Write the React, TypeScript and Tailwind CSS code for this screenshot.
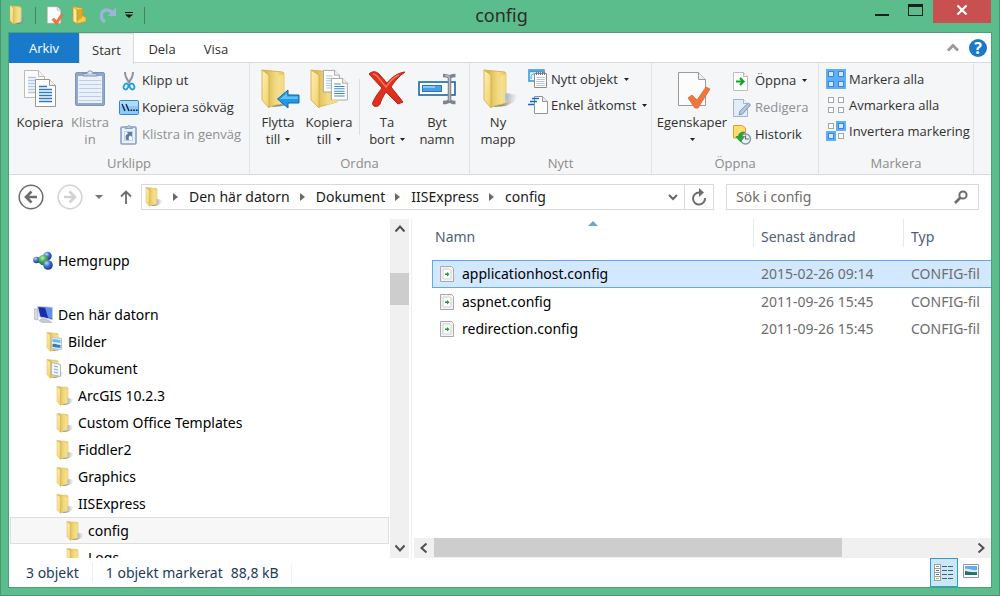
import { useState } from 'react';
import type { ReactNode } from 'react';
import clsx from 'clsx';

function Folder({ className, children }: { className?: string; children?: ReactNode }) {
  return (
    <svg viewBox="0 0 36 40" className={clsx('shrink-0', className)} aria-hidden="true">
      <defs>
        <linearGradient id="folderInside" x1="0" x2="1" y1="0" y2="0">
          <stop offset="0.2" stopColor="#dcb94c" />
          <stop offset="0.65" stopColor="#f3dc85" />
          <stop offset="1" stopColor="#e8c862" />
        </linearGradient>
        <linearGradient id="folderFront" x1="0" x2="1" y1="0" y2="1">
          <stop offset="0" stopColor="#fdf1b8" />
          <stop offset="1" stopColor="#f0cf66" />
        </linearGradient>
        <linearGradient id="folderShadow" x1="0" x2="1" y1="0" y2="0">
          <stop offset="0.3" stopColor="#6b6b6b" stopOpacity="0.8" />
          <stop offset="1" stopColor="#aaa" stopOpacity="0" />
        </linearGradient>
      </defs>
      <path d="M12 38 24 24 36 26 32 33 24 37Z" fill="url(#folderShadow)" />
      <path d="M2 1 23 3 24 5V34L9 38Z" fill="url(#folderInside)" stroke="#d0a843" strokeWidth="0.8" />
      {children}
      <path d="M18 7 25 5V33L18 36Z" fill="#f9e69c" opacity="0.6" />
      <path d="M2 1 9 6V39L2 31Z" fill="url(#folderFront)" stroke="#cfa948" strokeWidth="0.8" />
      <path d="M23 25v7l2-1v-7Z" fill="#9cc8e8" />
    </svg>
  );
}

function PageLines({ x, y, color }: { x: number; y: number; color: string }) {
  return (
    <g>
      <path d={`M${x + 0.5} ${y + 0.5}h14l6 6v21h-20Z`} fill="#fff" stroke="#969696" />
      <path d={`M${x + 14.5} ${y + 0.5}v6h6`} fill="#f2f2f2" stroke="#969696" />
      <path
        d={`M${x + 4} ${y + 7.5}h8m-8 3h13m-13 3h13m-13 3h13m-13 3h13m-13 3h13`}
        stroke={color}
        strokeWidth="1.300"
      />
    </g>
  );
}

function CopyIcon() {
  return (
    <svg viewBox="0 0 36 40" className="h-10 w-9" aria-hidden="true">
      <g opacity="0.6">
        <PageLines x={2} y={1} color="#79aede" />
      </g>
      <g transform="translate(13 10)">
        <PageLines x={0} y={0} color="#2f79c0" />
      </g>
    </svg>
  );
}

function PasteIcon() {
  return (
    <svg viewBox="0 0 32 40" className="h-10 w-8" aria-hidden="true">
      <rect x="1.5" y="3.5" width="29" height="33" rx="1.5" fill="#90a7cf" stroke="#8295b8" />
      <path d="M4 7h24v27H4Z" fill="#eaf1fb" />
      <path d="M5 11.5h22m-22 4h22m-22 4h22m-22 4h22m-22 4h22m-22 4h22" stroke="#bccde6" />
      <path d="M9 7V4.5h4C13 1 19 1 19 4.5h4V7Z" fill="#c3cfdf" stroke="#8295b0" />
      <circle cx="16" cy="3.5" r="1" fill="#f5f6f7" />
    </svg>
  );
}

function ScissorsIcon() {
  return (
    <svg viewBox="0 0 20 20" className="size-5" fill="none" aria-hidden="true">
      <path d="M6 1c0 4 2 8 5 11M14 1c0 4-2 8-5 11" stroke="#8b949d" strokeWidth="2" />
      <ellipse cx="7" cy="15.5" rx="2.2" ry="3" stroke="#1ca0dc" strokeWidth="1.8" transform="rotate(25 7 15.5)" />
      <ellipse cx="13" cy="15.5" rx="2.2" ry="3" stroke="#1ca0dc" strokeWidth="1.8" transform="rotate(-25 13 15.5)" />
    </svg>
  );
}

function PathIcon() {
  return (
    <svg viewBox="0 0 20 20" className="size-5" aria-hidden="true">
      <rect x="0.5" y="2.5" width="19" height="14" rx="1" fill="#8fc8fa" stroke="#2d89d8" />
      <path d="M1 3h18v5H1Z" fill="#b2dafc" />
      <path d="m3 6 3 7m1-7 3 7" stroke="#18293f" strokeWidth="1.4" />
      <path d="M11.5 12.2h1.7m1 0h1.7m1 0h1.7" stroke="#18293f" strokeWidth="1.6" />
    </svg>
  );
}

function PasteShortcutIcon() {
  return (
    <svg viewBox="0 0 20 20" className="size-5" aria-hidden="true">
      <rect x="2" y="2" width="15" height="17" rx="1" fill="#e8f0fa" stroke="#8aa0c6" strokeWidth="1.6" />
      <path d="M6 3.5V2h2.5c0-2 2.5-2 2.5 0h2.5v1.5Z" fill="#b9c8df" stroke="#8aa0c6" />
      <rect x="5.5" y="6.5" width="8" height="9" fill="#f7fafe" stroke="#c2d0e6" />
      <path d="M7 15c-1-4 0-6 2-6L8 7h5v5l-1.500-1.500C9.500 11 9.500 13 10 15Z" fill="#5f7ba8" />
    </svg>
  );
}

function MoveIcon() {
  return (
    <div className="relative">
      <Folder className="h-10 w-9" />
      <svg viewBox="0 0 24 20" className="absolute -right-1 bottom-0 h-5 w-6" aria-hidden="true">
        <path d="M1.5 10 12 1v5h11v8H12v5Z" fill="#1e9ae8" stroke="#1169b0" />
        <path d="M4 10 11 4v3.500h11V10Z" fill="#62c0f8" />
      </svg>
    </div>
  );
}

function CopyToIcon() {
  return (
    <svg viewBox="0 0 40 40" className="h-10 w-10" aria-hidden="true">
      <path d="M2 1 22 3 28 6V33L10 38Z" fill="url(#folderInside)" stroke="#d3ad4c" strokeWidth="0.8" />
      <g transform="translate(14 1) scale(.8)">
        <PageLines x={0} y={0} color="#a8c8e8" />
      </g>
      <g transform="translate(22 9) scale(.8)">
        <PageLines x={0} y={0} color="#3f86c9" />
      </g>
      <path d="M18 36V31h10v2Z" fill="#f3db83" />
      <path d="M2 1 10 6V39L2 31Z" fill="url(#folderFront)" stroke="#cfa948" strokeWidth="0.8" />
    </svg>
  );
}

function DeleteIcon() {
  return (
    <svg viewBox="0 0 40 40" className="size-10" aria-hidden="true">
      <path
        d="M2 5c3-3 7-3 10 0l8 9C24 9 30 4 38 3c-6 4-11 10-14 15l12 15-5 2-12-12c-3 4-5 9-6 12-2 4-9 3-7-2 2-5 6-10 9-14Z"
        fill="#e02f1c"
        stroke="#b02418"
      />
      <path d="M6 5c2 0 3 1 4 2l9 11c4-6 8-10 13-12" fill="none" stroke="#f3745c" strokeWidth="1.5" />
    </svg>
  );
}

function RenameIcon() {
  return (
    <svg viewBox="0 0 40 40" className="size-10" aria-hidden="true">
      <rect x="2" y="13" width="36" height="13" fill="#fff" stroke="#1766ab" strokeWidth="1.6" />
      <rect x="5.5" y="16.5" width="19" height="6" fill="#4d9fe3" stroke="#2978c4" />
      <path d="M6 17h12v2H6Z" fill="#8cc4f3" />
      <path
        d="M26 6.5c4 0 5.500.5 6.500 2 1-1.500 2.500-2 6-2M32.5 8v24M26 33.500c4 0 5.500-.5 6.500-2 1 1.500 2.500 2 6 2"
        fill="none"
        stroke="#7c858e"
        strokeWidth="3.6"
      />
      <path d="M28 6.5c3 0 4 1 4.5 2M32.500 8v24" fill="none" stroke="#b4bbc1" strokeWidth="1.4" />
    </svg>
  );
}

function NewItemIcon() {
  return (
    <svg viewBox="0 0 20 20" className="size-5" aria-hidden="true">
      <rect x="1" y="1" width="15" height="11" fill="#e7f4fd" stroke="#3f9bd6" strokeWidth="1.6" />
      <path d="M2 2.500h13" stroke="#3f9bd6" strokeWidth="1.500" />
      <path d="M3 10c0-4 1-5 3-5" fill="none" stroke="#3f9bd6" />
      <path d="M6.5 4.5h12v14h-12Z" fill="#fff" stroke="#8c8c8c" />
      <path d="M8.5 3v3m2-3v3m2-3v3m2-3v3m2-3v3" stroke="#777" />
      <path d="M8.5 8.5h8m-8 2h8m-8 2h8m-8 2h8m-8 2h8" stroke="#b4c7db" />
    </svg>
  );
}

function EasyAccessIcon() {
  return (
    <svg viewBox="0 0 20 20" className="size-5" aria-hidden="true">
      <path d="M6.5 1.5h8l5 5v12h-13Z" fill="#fff" stroke="#949494" />
      <path d="M14.5 1.5v5h5" fill="#eee" stroke="#949494" />
      <path d="M4 3.5h7M2 6.5h7M0 9.5h6" stroke="#1568d3" strokeWidth="1.5" />
    </svg>
  );
}

function PropertiesIcon({ className }: { className: string }) {
  return (
    <svg viewBox="0 0 36 40" className={className} aria-hidden="true">
      <path d="M2.5 3.5h20l7 7v26h-27Z" fill="#fcfcfc" stroke="#9b9b9b" />
      <path d="M22.5 3.5v7h7" fill="#eee" stroke="#9b9b9b" />
      <path d="m12 29 4-3 5 5 9-13 4 2-12 19h-3Z" fill="#f0763c" stroke="#d9673a" strokeWidth="0.8" />
    </svg>
  );
}

function OpenIcon() {
  return (
    <svg viewBox="0 0 20 20" className="size-5" aria-hidden="true">
      <path d="M1.5 1.5h10l4 4v14h-14Z" fill="#fff" stroke="#bdbdbd" />
      <path d="M11.5 1.5v4h4" fill="#eee" stroke="#bdbdbd" />
      <path d="M4 10.500h7M8 7l3.500 3.500L8 14" fill="none" stroke="#14a326" strokeWidth="2.200" />
    </svg>
  );
}

function ConfigFileIcon() {
  return (
    <svg viewBox="0 0 16 18" className="h-[18px] w-4 shrink-0" aria-hidden="true">
      <path d="M1.5 1.5h11l2 2v13h-13Z" fill="#f4f4f4" stroke="#a9a9a9" />
      <path d="M4 4h6.500l1.500 1.500V14H4Z" fill="#fff" stroke="#d0d0d0" />
      <path d="M6 8.5h2V7l2.500 2.300L8 11.500V10H6Z" fill="#159c26" />
    </svg>
  );
}

function EditIcon() {
  return (
    <svg viewBox="0 0 20 20" className="size-5" aria-hidden="true">
      <path d="M1.5 1.5h10l4 4v13h-14Z" fill="#e3edf9" stroke="#9fb4d2" />
      <path d="M11.5 1.5v4h4" fill="#f5f9fe" stroke="#9fb4d2" />
      <path d="m7 17 1-4 8.500-8 2 2-8 9Z" fill="#b3c5df" stroke="#7e97bd" />
    </svg>
  );
}

function HistoryIcon() {
  return (
    <svg viewBox="0 0 20 20" className="size-5" aria-hidden="true">
      <path d="M1.5.5h9l3 2.500v10h-12Z" fill="#fbdc6c" stroke="#cda436" />
      <circle cx="13.500" cy="14" r="5" fill="#eef2f6" stroke="#8496a8" strokeWidth="1.4" />
      <path d="M13.500 10.500V14H17" fill="none" stroke="#5c6e80" strokeWidth="1.2" />
      <path d="M12.500 7C8 7 6.500 9 6.500 11.500H4l4.500 5.500 4-5.500h-3c0-2 1-3 3-3.500Z" fill="#27a93a" stroke="#178326" strokeWidth="0.6" />
    </svg>
  );
}

// Four tiles; the cells listed in `on` get the blue highlight
function TilesIcon({ on }: { on: number[] }) {
  const cells = [[0, 0], [10, 0], [0, 10], [10, 10]];
  return (
    <svg viewBox="0 0 20 20" className="size-5" aria-hidden="true">
      {cells.map(([x, y], i) => {
        const active = on.includes(i);
        return (
          <g key={i}>
            {active && <rect x={x} y={y} width="10" height="10" fill="#5eaefc" />}
            <rect
              x={x + 2.5}
              y={y + 2.5}
              width="5"
              height="5"
              fill={active ? '#d3e8fd' : '#fff'}
              stroke={active ? '#3987d6' : '#a6a6a6'}
            />
          </g>
        );
      })}
    </svg>
  );
}

function HomegroupIcon() {
  return (
    <svg viewBox="0 0 20 20" className="size-5" aria-hidden="true">
      <defs>
        <radialGradient id="blueBall" cx="0.35" cy="0.3" r="0.7">
          <stop offset="0" stopColor="#c3d9f9" />
          <stop offset="0.5" stopColor="#4472d0" />
          <stop offset="1" stopColor="#1b358f" />
        </radialGradient>
        <radialGradient id="greenBall" cx="0.4" cy="0.3" r="0.7">
          <stop offset="0" stopColor="#c1ecb8" />
          <stop offset="0.5" stopColor="#42ab55" />
          <stop offset="1" stopColor="#1b7331" />
        </radialGradient>
      </defs>
      <circle cx="14.500" cy="5" r="4.200" fill="url(#blueBall)" />
      <circle cx="3.500" cy="9" r="3.300" fill="url(#blueBall)" />
      <circle cx="10.500" cy="9" r="5.200" fill="url(#greenBall)" />
      <circle cx="15" cy="14" r="4.800" fill="url(#blueBall)" />
    </svg>
  );
}

function ComputerIcon() {
  return (
    <svg viewBox="0 0 20 20" className="size-5" aria-hidden="true">
      <path d="M0 4h4v11l-4-1Z" fill="#d4dadf" stroke="#a0a8b0" strokeWidth="0.6" />
      <path d="M3.500 1.500 18.500 2.500v12L6 12Z" fill="#1a2fa6" stroke="#c6ccd4" />
      <path d="M11 2.500 18 3v10.500l-4-1Z" fill="#5e8ef0" />
      <path d="m8 13.500 6 1.500 4 2.500H8l-3-2Z" fill="#c4cad1" stroke="#a0a8b0" strokeWidth="0.5" />
    </svg>
  );
}

function PictureFolder() {
  return (
    <div className="relative">
      <Folder className="h-5 w-[18px]" />
      <svg viewBox="0 0 11 13" className="absolute right-0.5 bottom-0.5 h-[13px] w-[11px]" aria-hidden="true">
        <path d="m.5.5 10 1v11l-10-1Z" fill="#e9f3fb" stroke="#b3c2ce" />
        <path d="m1.500 2 8 1v3l-8-1Z" fill="#6cb7ee" />
        <path d="M1.500 7c3-1 5 1 8 1v3l-8-1Z" fill="#3b7cab" />
      </svg>
    </div>
  );
}

function DocumentFolder() {
  return (
    <div className="relative">
      <Folder className="h-5 w-[18px]" />
      <svg viewBox="0 0 10 15" className="absolute right-[3px] bottom-0.5 h-[15px] w-2.5" aria-hidden="true">
        <path d="m.5.5 9 2v12l-9-2Z" fill="#f2f6fa" stroke="#b3bac2" />
        <path d="m3 4 4 1m-4 2 4 1m-4 2 4 1" stroke="#8aa6c6" />
      </svg>
    </div>
  );
}

function Caret() {
  return (
    <svg viewBox="0 0 5 3" className="inline-block h-[3px] w-[5px]" aria-hidden="true">
      <path d="M0 0h5L2.5 3Z" fill="#222" />
    </svg>
  );
}

function BigButton({ icon, lines, caret, disabled, className }: {
  icon: ReactNode;
  lines: string[];
  caret?: boolean;
  disabled?: boolean;
  className: string;
}) {
  return (
    <button
      type="button"
      disabled={disabled}
      className={clsx('flex shrink-0 flex-col items-center pt-1.5 leading-[17px]', disabled && 'text-[#8f8f8f]', className)}
    >
      <span className="mb-[5px] flex h-10 justify-center">{icon}</span>
      {lines.map((line, i) => (
        <span key={i} className="flex h-[17px] items-center gap-[5px] whitespace-nowrap">
          {line}
          {caret && i === lines.length - 1 && <Caret />}
        </span>
      ))}
    </button>
  );
}

function SmallButton({ icon, label, caret, disabled, tight }: {
  icon: ReactNode;
  label: string;
  caret?: boolean;
  disabled?: boolean;
  tight?: boolean;
}) {
  return (
    <button
      type="button"
      disabled={disabled}
      className={clsx(
        'flex items-center whitespace-nowrap',
        tight ? 'h-[26px]' : 'h-[27px]',
        disabled && 'text-[#8f8f8f]'
      )}
    >
      <span className="mr-[3px]">{icon}</span>
      {label}
      {caret && <span className="ml-1.5 flex"><Caret /></span>}
    </button>
  );
}

function Group({ title, className, children }: { title: string; className: string; children: ReactNode }) {
  return (
    <section aria-label={title} className={clsx('flex shrink-0 flex-col', className)}>
      <div className="flex flex-1 border-r border-[#e1e3e5]">
        <div className="flex flex-1 flex-col">
          <div className="flex flex-1 px-[3px]">{children}</div>
          <div className="pb-0.5 text-center leading-[18px] text-[#8c8c8c]">{title}</div>
        </div>
      </div>
    </section>
  );
}

const tree = [
  { label: 'Den här datorn', indent: 'pl-[23px]', icon: <ComputerIcon /> },
  { label: 'Bilder', indent: 'pl-[35px]', icon: <PictureFolder /> },
  { label: 'Dokument', indent: 'pl-[35px]', icon: <DocumentFolder /> },
  { label: 'ArcGIS 10.2.3', indent: 'pl-[45px]' },
  { label: 'Custom Office Templates', indent: 'pl-[45px]' },
  { label: 'Fiddler2', indent: 'pl-[45px]' },
  { label: 'Graphics', indent: 'pl-[45px]' },
  { label: 'IISExpress', indent: 'pl-[45px]' },
  { label: 'config', indent: 'pl-[55px]', current: true },
  { label: 'Logs', indent: 'pl-[55px]' },
];

const files = [
  { name: 'applicationhost.config', modified: '2015-02-26 09:14', type: 'CONFIG-fil' },
  { name: 'aspnet.config', modified: '2011-09-26 15:45', type: 'CONFIG-fil' },
  { name: 'redirection.config', modified: '2011-09-26 15:45', type: 'CONFIG-fil' },
];

const crumbs = ['Den här datorn', 'Dokument', 'IISExpress', 'config'];

function TitleBar() {
  return (
    <header className="grid h-8 shrink-0 grid-cols-[1fr_auto_1fr] pr-px">
      <div className="flex h-[30px] items-center pl-px">
        <Folder className="h-5 w-[18px]" />
        <span className="ml-2 h-[17px] w-px bg-[#43825f]" />
        <button type="button" aria-label="Egenskaper" className="ml-2.5">
          <PropertiesIcon className="h-5 w-[18px]" />
        </button>
        <button type="button" aria-label="Ny mapp" className="ml-2">
          <svg viewBox="0 0 16 20" className="h-5 w-4" aria-hidden="true">
            <path d="M1 1.500 10.500 3v8L14 12v4.500L5 19Z" fill="#f4cf4e" stroke="#c9961f" strokeWidth="0.8" />
            <path d="M5 4.500 10 4v9l-5 3Z" fill="#d9a92c" />
            <path d="M1 1.500 5 5v14l-4-3Z" fill="#fdec9a" stroke="#c9961f" strokeWidth="0.8" />
          </svg>
        </button>
        <button type="button" aria-label="Gör om" className="ml-[11px]">
          <svg viewBox="0 0 18 18" className="size-[18px]" fill="none" aria-hidden="true">
            <path d="M6 16C1 13 1 5 7 4c3-.5 5 1 7 3" stroke="#9db4d6" strokeWidth="3.400" />
            <path d="M17 1.500V10H8.500Z" fill="#9db4d6" />
          </svg>
        </button>
        <button type="button" aria-label="Anpassa verktygsfältet" className="ml-2">
          <svg viewBox="0 0 8 6" className="h-1.5 w-2" aria-hidden="true">
            <path d="M0 0h8v1H0ZM0 2.500h8L4 6Z" fill="#111" />
          </svg>
        </button>
        <span className="ml-[11px] h-[17px] w-px bg-[#43825f]" />
      </div>
      <h1 className="pl-1 text-lg leading-[30px] text-[#2c2c2c]">config</h1>
      <div className="flex items-start justify-end">
        <button type="button" aria-label="Minimera" className="mt-3.5 mr-[19px] h-[2px] w-3.5 bg-[#1f1f1f]" />
        <button
          type="button"
          aria-label="Maximera"
          className="mt-1 mr-2.5 h-3 w-[15px] border border-t-[3px] border-[#1f1f1f]"
        />
        <button type="button" aria-label="Stäng" className="flex h-[23px] w-[58px] items-center justify-center bg-[#c85051] pb-1">
          <svg viewBox="0 0 12 10" className="h-2.5 w-3" aria-hidden="true">
            <path d="m1.5.5 9 9m0-9-9 9" stroke="#fff" strokeWidth="2.2" />
          </svg>
        </button>
      </div>
    </header>
  );
}

function Ribbon() {
  return (
    <div className="flex h-28 shrink-0 overflow-hidden border-b border-[#dadbdc] bg-[#f5f6f7] font-['Open_Sans','Noto_Sans',sans-serif] text-[13px] text-[#303030]">
      <Group title="Urklipp" className="w-[241px]">
        <BigButton className="w-[56px]" icon={<CopyIcon />} lines={['Kopiera']} />
        <BigButton className="w-[44px]" icon={<PasteIcon />} lines={['Klistra', 'in']} disabled />
        <div className="ml-[7px] pt-1">
          <SmallButton icon={<ScissorsIcon />} label="Klipp ut" />
          <SmallButton icon={<PathIcon />} label="Kopiera sökväg" />
          <SmallButton icon={<PasteShortcutIcon />} label="Klistra in genväg" disabled />
        </div>
      </Group>
      <Group title="Ordna" className="w-[220px]">
        <BigButton className="w-[50px]" icon={<MoveIcon />} lines={['Flytta', 'till']} caret />
        <BigButton className="w-[52px]" icon={<CopyToIcon />} lines={['Kopiera', 'till']} caret />
        <span className="mt-4 ml-1 h-14 w-px bg-[#dcdee0]" />
        <BigButton className="ml-0.5 w-[50px]" icon={<DeleteIcon />} lines={['Ta', 'bort']} caret />
        <BigButton className="w-[50px]" icon={<RenameIcon />} lines={['Byt', 'namn']} />
      </Group>
      <Group title="Nytt" className="w-[182px]">
        <BigButton
          className="w-[50px]"
          icon={<Folder className="ml-1 h-10 w-9" />}
          lines={['Ny', 'mapp']}
        />
        <div className="ml-[5px] pt-[3px]">
          <SmallButton icon={<NewItemIcon />} label="Nytt objekt" caret tight />
          <SmallButton icon={<EasyAccessIcon />} label="Enkel åtkomst" caret tight />
        </div>
      </Group>
      <Group title="Öppna" className="w-[167px]">
        <BigButton
          className="w-[74px]"
          icon={<PropertiesIcon className="ml-1 h-10 w-9" />}
          lines={['Egenskaper', '']}
          caret
        />
        <div className="ml-[3px] pt-1">
          <SmallButton icon={<OpenIcon />} label="Öppna" caret />
          <SmallButton icon={<EditIcon />} label="Redigera" disabled />
          <SmallButton icon={<HistoryIcon />} label="Historik" />
        </div>
      </Group>
      <Group title="Markera" className="w-[155px]">
        <div className="ml-1 pt-[3px]">
          <SmallButton icon={<TilesIcon on={[0, 1, 2, 3]} />} label="Markera alla" tight />
          <SmallButton icon={<TilesIcon on={[]} />} label="Avmarkera alla" tight />
          <SmallButton icon={<TilesIcon on={[1, 2]} />} label="Invertera markering" tight />
        </div>
      </Group>
    </div>
  );
}

function AddressRow() {
  return (
    <div className="flex h-11 shrink-0 items-center pr-3 pl-[9px]">
      <button type="button" aria-label="Bakåt">
        <svg viewBox="0 0 26 26" className="size-[26px]" fill="none" stroke="#6d6d6d" aria-hidden="true">
          <circle cx="13" cy="13" r="11.8" strokeWidth="1.5" />
          <path d="M19 13H8m5.500-5.500L8 13l5.500 5.500" strokeWidth="2.6" />
        </svg>
      </button>
      <button type="button" aria-label="Framåt" disabled className="ml-[13px]">
        <svg viewBox="0 0 26 26" className="size-[26px]" fill="none" stroke="#d2d2d2" aria-hidden="true">
          <circle cx="13" cy="13" r="11.8" strokeWidth="1.5" />
          <path d="M7 13h11m-5.500-5.500L18 13l-5.500 5.500" strokeWidth="2.6" />
        </svg>
      </button>
      <button type="button" aria-label="Senaste platser" className="ml-3">
        <svg viewBox="0 0 8 4" className="h-1 w-2" aria-hidden="true">
          <path d="M0 0h8L4 4Z" fill="#777" />
        </svg>
      </button>
      <button type="button" aria-label="Upp" className="ml-4">
        <svg viewBox="0 0 14 14" className="size-3.5" fill="none" stroke="#6d6d6d" strokeWidth="1.8" aria-hidden="true">
          <path d="M7 14V1.500M2 6.500l5-5 5 5" />
        </svg>
      </button>
      <nav aria-label="Adress" className="ml-2 flex h-[26px] min-w-0 flex-1 items-center border border-[#d9d9d9] pl-[3px] text-[#1a1a1a]">
        <Folder className="h-5 w-[18px]" />
        {crumbs.map((crumb, i) => (
          <span key={crumb} className="flex items-center">
            <svg viewBox="0 0 5 8" className="mr-[11px] ml-2.5 h-2 w-[5px]" aria-hidden="true">
              <path d="M0 0v8l5-4Z" fill="#6a6a6a" />
            </svg>
            <button type="button" className="whitespace-nowrap">{crumb}</button>
          </span>
        ))}
        <button type="button" aria-label="Tidigare platser" className="ml-auto px-1.5">
          <svg viewBox="0 0 10 7" className="h-[7px] w-2.5" fill="none" stroke="#666" strokeWidth="2" aria-hidden="true">
            <path d="m1 1 4 4 4-4" />
          </svg>
        </button>
        <button
          type="button"
          aria-label="Uppdatera"
          className="flex h-full w-[29px] items-center justify-center border-l border-[#d9d9d9]"
        >
          <svg viewBox="0 0 16 18" className="h-[18px] w-4" fill="none" aria-hidden="true">
            <path d="M10 4.500H8A6 6 0 1 0 14 10" stroke="#6d6d6d" strokeWidth="2" />
            <path d="M8 0 13 4.500 8 9Z" fill="#6d6d6d" />
          </svg>
        </button>
      </nav>
      <label className="ml-3 flex h-[26px] w-[253px] items-center border border-[#d9d9d9] pr-2.5 pl-[9px]">
        <input
          type="text"
          aria-label="Sök"
          placeholder="Sök i config"
          className="min-w-0 flex-1 outline-none placeholder:text-[#6d6d6d]"
        />
        <svg viewBox="0 0 14 14" className="size-3.5" fill="none" stroke="#6d6d6d" aria-hidden="true">
          <circle cx="9" cy="5" r="3.6" strokeWidth="2" />
          <path d="M6.5 7.5 1 13" strokeWidth="2.6" />
        </svg>
      </label>
    </div>
  );
}

function Chevron({ className }: { className?: string }) {
  return (
    <svg viewBox="0 0 12 8" className={clsx('h-2 w-3', className)} fill="none" stroke="#505050" strokeWidth="2" aria-hidden="true">
      <path d="m1.500 6.500 4.500-5 4.500 5" />
    </svg>
  );
}

function Sidebar() {
  return (
    <aside className="flex w-[403px] shrink-0 border-r border-[#f0f0f0] pr-0.5">
      <div className="flex-1 overflow-hidden pt-7 pl-px">
        <button type="button" className="mb-[27px] flex h-[27px] items-center gap-[5px] pl-[23px]">
          <HomegroupIcon />
          Hemgrupp
        </button>
        <ul>
          {tree.map((node) => (
            <li key={node.label}>
              <button
                type="button"
                className={clsx(
                  'flex h-[27px] w-full items-center gap-1 border',
                  node.current ? 'border-[#dedede] bg-[#f7f7f7]' : 'border-transparent',
                  node.indent
                )}
              >
                {node.icon ?? <Folder className="h-5 w-[18px]" />}
                {node.label}
              </button>
            </li>
          ))}
        </ul>
      </div>
      <div className="ml-px flex w-[19px] flex-col items-center justify-between bg-[#f0f0f0]">
        <button type="button" aria-label="Rulla upp" className="flex h-5 items-center">
          <Chevron />
        </button>
        <span className="mb-auto mt-[34px] h-8 w-full bg-[#cdcdcd]" />
        <button type="button" aria-label="Rulla ned" className="flex h-5 items-center">
          <Chevron className="rotate-180" />
        </button>
      </div>
    </aside>
  );
}

function FileList() {
  const [selected, setSelected] = useState('applicationhost.config');

  return (
    <main className="flex min-w-0 flex-1 flex-col pl-0.5">
      <div className="flex-1 overflow-hidden pl-[18px]">
        <table className="w-full table-fixed border-separate border-spacing-0 text-left">
          <colgroup>
            <col />
            <col className="w-[150px]" />
            <col className="w-[88px]" />
          </colgroup>
          <thead className="text-[#4c607a]">
            <tr className="h-[41px] align-top">
              <th className="relative pt-2 pl-[3px] font-normal leading-5">
                Namn
                <svg viewBox="0 0 10 5" className="absolute top-0.5 left-1/2 h-[5px] w-2.5 -translate-x-1/2" aria-hidden="true">
                  <path d="m5 0 5 5H0Z" fill="#6ba7cf" />
                </svg>
              </th>
              {['Senast ändrad', 'Typ'].map((head) => (
                <th key={head} className="font-normal leading-5">
                  <div className="h-7 border-l border-[#e4eaf1] pt-2 pl-[7px]">{head}</div>
                </th>
              ))}
            </tr>
          </thead>
          <tbody>
            {files.map((file) => {
              const active = file.name === selected;
              const cell = active ? 'border-y border-[#66a7e8] bg-[#d1e8ff]' : 'border-y border-transparent';
              return (
                <tr
                  key={file.name}
                  className={clsx('text-[#6d6d6d]', active ? 'h-7' : 'h-[27px]')}
                  onClick={() => setSelected(file.name)}
                >
                  <td className={clsx('border-l pl-1.5', cell)}>
                    <button type="button" className="flex items-center gap-[7px] leading-5 text-black">
                      <ConfigFileIcon />
                      {file.name}
                    </button>
                  </td>
                  <td className={clsx('pl-2 leading-5 whitespace-nowrap', cell)}>{file.modified}</td>
                  <td className={clsx('pl-2 leading-5 whitespace-nowrap', cell)}>{file.type}</td>
                </tr>
              );
            })}
          </tbody>
        </table>
      </div>
      <div className="flex h-5 items-center bg-[#f0f0f0]">
        <button type="button" aria-label="Rulla åt vänster" className="flex w-5 justify-center">
          <Chevron className="-rotate-90" />
        </button>
        <div className="h-full flex-1">
          <div className="h-[19px] w-[76%] bg-[#cdcdcd]" />
        </div>
        <button type="button" aria-label="Rulla åt höger" className="flex w-5 justify-center">
          <Chevron className="rotate-90" />
        </button>
      </div>
    </main>
  );
}

function StatusBar() {
  return (
    <footer className="flex h-[29px] shrink-0 items-center pr-3 pl-[17px] text-[#1e395b]">
      <span>3 objekt</span>
      <span className="mx-[13px] h-5 w-px bg-[#ededed]" />
      <span>1 objekt markerat</span>
      <span className="ml-2">88,8 kB</span>
      <span className="ml-3 h-5 w-px bg-[#f3f3f3]" />
      <button
        type="button"
        aria-label="Detaljer"
        aria-pressed="true"
        className="ml-auto flex h-[29px] w-7 items-center justify-center border border-[#26a0da] bg-[#cbe8f6]"
      >
        <svg viewBox="0 0 20 18" className="h-[18px] w-5" aria-hidden="true">
          {['#71a483', '#e23b3b', '#4b79df', '#b7bd28'].map((color, i) => (
            <g key={color}>
              <rect x="0.5" y={i * 4 + 0.5} width="6" height="4" fill="#fff" stroke="#98a3ae" />
              <rect x="2" y={i * 4 + 2} width="3" height="1" fill={color} />
              <path d={`M8 ${i * 4 + 2.5}h5m1 0h5`} stroke="#4e5d70" />
            </g>
          ))}
        </svg>
      </button>
      <button type="button" aria-label="Miniatyrer" className="mb-1 ml-[5px]">
        <svg viewBox="0 0 16 14" className="h-3.5 w-4" aria-hidden="true">
          <path d="M.5.5h15v13H.5Z" fill="#fff" stroke="#8b98ab" />
          <path d="M2 2h12v9H2Z" fill="#5eb0f2" />
          <path d="M2 5c4-1 7 2 12 1v2H2Z" fill="#d9f0fd" />
          <path d="M2 7c3 0 6 2 12 1v3H2Z" fill="#2a6d6a" />
        </svg>
      </button>
    </footer>
  );
}

export default function App() {
  return (
    <div className="flex h-screen flex-col border border-t-0 border-[#4b9672] bg-[#5bbd8b] px-[7px] pb-[7px] font-['Noto_Sans','Open_Sans',sans-serif] text-sm">
      <TitleBar />
      <div className="flex min-h-0 flex-1 flex-col border border-[#4f9f79] bg-white">
        <div className="flex h-[30px] shrink-0 font-['Open_Sans','Noto_Sans',sans-serif] text-[13px] text-[#303030]" role="tablist">
          <button type="button" role="tab" className="w-[70px] bg-[#1979ca] text-white">Arkiv</button>
          <button
            type="button"
            role="tab"
            aria-selected="true"
            className="relative z-10 -mb-px w-[55px] border border-b-0 border-[#dadbdc] bg-[#f5f6f7] pt-0.5"
          >
            Start
          </button>
          <button type="button" role="tab" className="w-14 border-b border-[#dadbdc] pt-1">Dela</button>
          <button type="button" role="tab" className="w-[52px] border-b border-[#dadbdc] pt-1">Visa</button>
          <div className="flex flex-1 items-center justify-end gap-2.5 border-b border-[#dadbdc] pr-1">
            <button type="button" aria-label="Minimera menyfliksområdet">
              <svg viewBox="0 0 12 9" className="h-[9px] w-3" fill="none" stroke="#999" strokeWidth="2.8" aria-hidden="true">
                <path d="m1 7.500 5-5 5 5" />
              </svg>
            </button>
            <button
              type="button"
              aria-label="Hjälp"
              className="size-[18px] rounded-full bg-[#1979ca] text-base leading-[18px] font-bold text-white"
            >
              ?
            </button>
          </div>
        </div>
        <Ribbon />
        <AddressRow />
        <div className="flex min-h-0 flex-1">
          <Sidebar />
          <FileList />
        </div>
        <StatusBar />
      </div>
    </div>
  );
}
